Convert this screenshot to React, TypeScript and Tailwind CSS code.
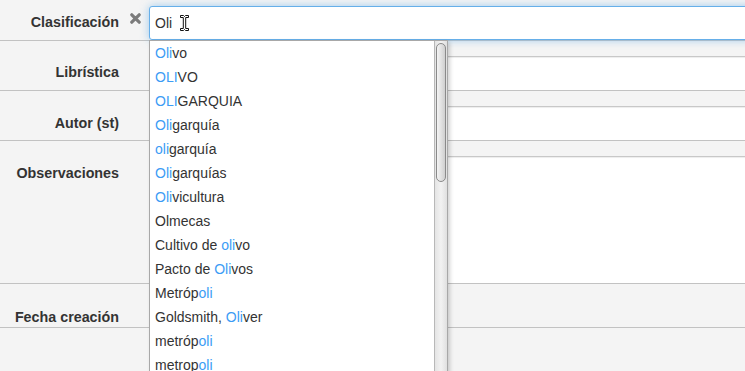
import React from "react";

const items: [string, string, string][] = [
  ["", "Oli", "vo"],
  ["", "OLI", "VO"],
  ["", "OLI", "GARQUIA"],
  ["", "Oli", "garquía"],
  ["", "oli", "garquía"],
  ["", "Oli", "garquías"],
  ["", "Oli", "vicultura"],
  ["Olmecas", "", ""],
  ["Cultivo de ", "oli", "vo"],
  ["Pacto de ", "Oli", "vos"],
  ["Metróp", "oli", ""],
  ["Goldsmith, ", "Oli", "ver"],
  ["metróp", "oli", ""],
  ["metrop", "oli", ""],
];

function Label({ text, pt }: { text: string; pt: string }) {
  return (
    <div className={`w-[149px] shrink-0 flex ${pt}`}>
      <div className="w-[119px] text-right font-bold text-[14.3px] leading-[20px] text-[#333] whitespace-nowrap">{text}</div>
    </div>
  );
}

export default function App() {
  return (
    <div
      className="relative w-[745px] h-[371px] overflow-hidden bg-[#f4f4f4]"
      style={{ fontFamily: '"Liberation Sans", Arial, sans-serif' }}
    >
      {/* Row 1 */}
      <div className="flex h-[41px] border-b border-[#c2c2c2]">
        <div className="w-[149px] shrink-0 flex pt-[12px]">
          <div className="w-[119px] text-right font-bold text-[14.3px] leading-[20px] text-[#333] whitespace-nowrap">Clasificación</div>
          <div className="pl-[11px] pt-[1px]">
            <svg width="11" height="11" viewBox="0 0 11 11">
              <path d="M1.8 1.8 L9.2 9.2 M9.2 1.8 L1.8 9.2" stroke="#7b7b7b" strokeWidth="3.2" strokeLinecap="round" />
            </svg>
          </div>
        </div>
        <div className="pt-[6px]">
          <div className="relative w-[640px] h-[34px] bg-white border border-[#66afe9] rounded-[3px] shadow-[0_0_8px_rgba(102,175,233,0.6)] flex items-center pl-[5px] text-[14px] text-[#333]">
            Oli
            <svg className="absolute left-[30px] top-[8px]" width="9" height="16" viewBox="0 0 9 16">
              <path
                d="M0.5 0.5 H3.5 L4.5 1.5 L5.5 0.5 H8.5 V2.5 H5.7 V13.5 H8.5 V15.5 H5.5 L4.5 14.5 L3.5 15.5 H0.5 V13.5 H3.3 V2.5 H0.5 Z"
                fill="#fff"
                stroke="#111"
                strokeWidth="1"
                strokeLinejoin="miter"
              />
            </svg>
          </div>
        </div>
      </div>
      {/* Row 2 */}
      <div className="flex h-[50px] border-b border-[#c2c2c2]">
        <Label text="Librística" pt="pt-[21px]" />
        <div className="pt-[15px]">
          <div className="w-[640px] h-[34px] bg-white border border-[#c8c8c8] border-b-0 shadow-[inset_0_1px_1px_rgba(0,0,0,0.075)]" />
        </div>
      </div>
      {/* Row 3 */}
      <div className="flex h-[50px] border-b border-[#c2c2c2]">
        <Label text="Autor (st)" pt="pt-[22px]" />
        <div className="pt-[15px]">
          <div className="w-[640px] h-[34px] bg-white border border-[#c8c8c8] border-b-0 shadow-[inset_0_1px_1px_rgba(0,0,0,0.075)]" />
        </div>
      </div>
      {/* Row 4 */}
      <div className="flex h-[143px] border-b border-[#c2c2c2]">
        <Label text="Observaciones" pt="pt-[22px]" />
        <div className="pt-[15px]">
          <div className="w-[640px] h-[127px] bg-white border border-[#c8c8c8] border-b-0 shadow-[inset_0_1px_1px_rgba(0,0,0,0.075)]" />
        </div>
      </div>
      {/* Row 5 */}
      <div className="flex h-[44px] border-b border-[#c2c2c2]">
        <Label text="Fecha creación" pt="pt-[23px]" />
        <div className="pt-[15px]">
          <div className="w-[200px] h-[28px] bg-white border border-[#c8c8c8] border-b-0" />
        </div>
      </div>
      {/* Row 6 */}
      <div className="h-[60px]" />

      {/* Autocomplete dropdown */}
      <div className="absolute left-[149px] top-[40px] w-[299px] h-[340px] bg-white border border-[#a8a8a8] shadow-[2px_2px_4px_rgba(0,0,0,0.18)] flex">
        <div className="flex-1 flex flex-col">
          {items.map(([a, b, c], i) => (
            <div key={i} className="h-[24px] leading-[24px] pl-[5px] text-[14px] text-[#333] whitespace-nowrap">
              {a}
              <span className="text-[#3c9cf5]">{b}</span>
              {c}
            </div>
          ))}
        </div>
        <div className="w-[13px] h-full border-l border-[#b8b8b8] bg-gradient-to-r from-[#e4e4e4] via-[#f2f2f2] to-[#e0e0e0] relative">
          <div className="absolute left-[1px] top-[2px] w-[10px] h-[139px] rounded-full border border-[#8a8a8a] bg-gradient-to-r from-[#f4f4f4] via-[#e2e2e2] to-[#cfcfcf]" />
        </div>
      </div>
    </div>
  );
}
